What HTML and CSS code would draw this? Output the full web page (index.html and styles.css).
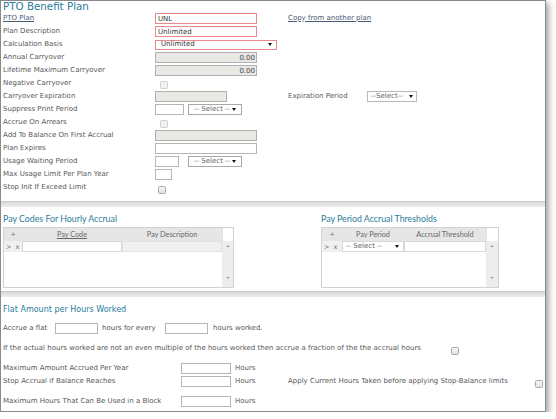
FILE: index.html
```html
<!DOCTYPE html>
<html lang="en">
<head>
<meta charset="utf-8">
<title>PTO Benefit Plan</title>
<link rel="stylesheet" href="styles.css">
</head>
<body>
<div class="window">
  <section class="plan">
    <h1 class="plan-title">PTO Benefit Plan</h1>
    <div class="row"><a class="lbl link">PTO Plan</a><div class="ctl"><input class="inp req w102" value="UNL"></div><a class="link">Copy from another plan</a></div>
    <div class="row"><span class="lbl">Plan Description</span><div class="ctl"><input class="inp req w102" value="Unlimited"></div></div>
    <div class="row"><span class="lbl">Calculation Basis</span><div class="ctl"><div class="select sel-calc req"><span class="sel-text dark">Unlimited</span><span class="arrow"></span></div></div></div>
    <div class="row"><span class="lbl">Annual Carryover</span><div class="ctl"><input class="inp dis w102" value="0.00" disabled></div></div>
    <div class="row"><span class="lbl">Lifetime Maximum Carryover</span><div class="ctl"><input class="inp dis w102" value="0.00" disabled></div></div>
    <div class="row"><span class="lbl">Negative Carryover</span><div class="ctl"><span class="cb cb-off cb-in"></span></div></div>
    <div class="row"><span class="lbl">Carryover Expiration</span><div class="ctl"><input class="inp dis w72" disabled></div><span class="rlbl">Expiration Period</span><div class="select sel-exp"><span class="sel-text">--Select--</span><span class="arrow"></span></div></div>
    <div class="row"><span class="lbl">Suppress Print Period</span><div class="ctl pair"><input class="inp w29"><div class="select sel-small"><span class="sel-text">-- Select --</span><span class="arrow"></span></div></div></div>
    <div class="row"><span class="lbl">Accrue On Arrears</span><div class="ctl"><span class="cb cb-off cb-in"></span></div></div>
    <div class="row"><span class="lbl">Add To Balance On First Accrual</span><div class="ctl"><input class="inp dis w102" disabled></div></div>
    <div class="row"><span class="lbl">Plan Expires</span><div class="ctl"><input class="inp w102"></div></div>
    <div class="row"><span class="lbl">Usage Waiting Period</span><div class="ctl pair"><input class="inp w24"><div class="select sel-small"><span class="sel-text">-- Select --</span><span class="arrow"></span></div></div></div>
    <div class="row"><span class="lbl">Max Usage Limit Per Plan Year</span><div class="ctl"><input class="inp w17"></div></div>
    <div class="row"><span class="lbl">Stop Init If Exceed Limit</span><div class="ctl"><span class="cb cb-in2"></span></div></div>
  </section>

  <div class="band"></div>

  <section class="grids">
    <div class="gcol gcol-left">
      <h2 class="gtitle">Pay Codes For Hourly Accrual</h2>
      <div class="grid grid-a">
        <div class="gh">+</div>
        <div class="gh"><span class="ul">Pay Code</span></div>
        <div class="gh">Pay Description</div>
        <div class="gh-blank"></div>
        <div class="gctl"><span>&gt;</span><span>x</span></div>
        <div class="gcell-in"></div>
        <div class="gcell-gray"></div>
        <div class="gscroll"><span class="up"></span><span class="down"></span></div>
        <div class="gempty"></div>
      </div>
    </div>
    <div class="gcol">
      <h2 class="gtitle">Pay Period Accrual Thresholds</h2>
      <div class="grid grid-b">
        <div class="gh">+</div>
        <div class="gh">Pay Period</div>
        <div class="gh">Accrual Threshold</div>
        <div class="gh-blank"></div>
        <div class="gctl"><span>&gt;</span><span>x</span></div>
        <div class="gcell-sel"><span class="sel-text">-- Select --</span><span class="arrow"></span></div>
        <div class="gcell-in"></div>
        <div class="gscroll"><span class="up"></span><span class="down"></span></div>
        <div class="gempty"></div>
      </div>
    </div>
  </section>

  <div class="band"></div>

  <section class="flat">
    <h2 class="flat-title">Flat Amount per Hours Worked</h2>
    <div class="frow first"><span class="t-accrue">Accrue a flat</span><input class="inp w43"><span class="t-every">hours for every</span><input class="inp w43"><span class="t-worked">hours worked.</span></div>
    <div class="frow gap"><span class="t-long">If the actual hours worked are not an even multiple of the hours worked then accrue a fraction of the the accrual hours</span><span class="cb cb-low"></span></div>
    <div class="frow gap"><span class="flbl">Maximum Amount Accrued Per Year</span><input class="inp w50"><span class="hours">Hours</span></div>
    <div class="frow"><span class="flbl">Stop Accrual if Balance Reaches</span><input class="inp w50"><span class="hours">Hours</span><span class="t-apply">Apply Current Hours Taken before applying Stop-Balance limits</span><span class="cb cb-low cb-right"></span></div>
    <div class="frow gap"><span class="flbl">Maximum Hours That Can Be Used in a Block</span><input class="inp w50"><span class="hours">Hours</span></div>
  </section>
</div>
</body>
</html>
```

FILE: styles.css
```css
* { box-sizing: border-box; }

body {
  margin: 0;
  background: #fff;
  font-family: "DejaVu Sans", Verdana, sans-serif;
  font-size: 7px;
  color: #585858;
}

.window {
  width: 546px;
  height: 412px;
  border: 1px solid #8a8a8a;
  background: #fff;
  box-shadow: 3px 3px 6px rgba(0, 0, 0, 0.35);
  overflow: hidden;
}

/* ---------- section 1 ---------- */
.plan { padding: 0 0 8px 2px; }

.plan-title {
  margin: 0;
  height: 10px;
  font-size: 10.3px;
  line-height: 10px;
  font-weight: normal;
  color: #2a7c9c;
}

.row {
  display: flex;
  align-items: center;
  height: 13px;
  white-space: nowrap;
}

.lbl { width: 152px; flex: none; }
.ctl { width: 133px; flex: none; display: flex; align-items: center; height: 13px; }
.pair { display: grid; grid-template-columns: 33px auto; align-items: center; }
.rlbl { width: 79px; flex: none; }

.link { color: #4a5a78; text-decoration: underline; }

.inp {
  height: 11px;
  margin: 2px 0 0;
  padding: 0 2px;
  border: 1px solid #b5b5b5;
  background: #fff;
  font-family: "DejaVu Sans", Verdana, sans-serif;
  font-size: 7px;
  line-height: 9px;
  color: #333;
  outline: none;
}
.req { border-color: #e88a8a; }
.dis { background: #e8e8e4; border-color: #b0b0b0; text-align: right; padding-right: 1px; color: #444; }

.w102 { width: 102px; }
.w72 { width: 72px; }
.w29 { width: 29px; }
.w24 { width: 24px; }
.w17 { width: 17px; }
.w43 { width: 43px; }
.w50 { width: 50px; }

.select {
  height: 11px;
  margin-top: 2px;
  border: 1px solid #a8a8a8;
  background: #fff;
  display: flex;
  align-items: center;
  justify-content: space-between;
  color: #666;
}
.sel-calc { width: 122px; padding: 0 4px 0 5px; border-color: #e88a8a; height: 10px; }
.sel-small { width: 54px; padding: 0 5px 0 5px; }
.sel-exp { width: 50px; padding: 0 3px 0 3px; border-color: #b8b8b8; }
.sel-text { line-height: 9px; }
.dark { color: #333; }

.arrow {
  width: 0;
  height: 0;
  border-left: 2px solid transparent;
  border-right: 2px solid transparent;
  border-top: 3px solid #111;
}

.cb {
  display: block;
  width: 8px;
  height: 8px;
  border: 1px solid #a9a9a9;
  border-radius: 1.5px;
  background: linear-gradient(#f7f7f7, #e0e0e0);
}
.cb-off { border-color: #cfcfcf; background: #f1f1f1; }
.cb-in { margin: 5px 0 0 5px; }
.cb-in2 { margin: 6px 0 0 3px; }

/* ---------- bands ---------- */
.band {
  height: 6px;
  border-top: 1px solid #cacaca;
  background: linear-gradient(#dadada, #ececec);
}

/* ---------- section 2 ---------- */
.grids { display: flex; padding: 6px 0 3px 2px; }
.gcol-left { width: 318px; flex: none; }

.gtitle {
  margin: 0 0 2px;
  font-family: Lato, "DejaVu Sans", sans-serif;
  font-size: 8.8px;
  line-height: 12px;
  font-weight: normal;
  color: #2a7c9c;
}

.grid {
  display: grid;
  height: 61px;
  border: 1px solid #d2d2d2;
  grid-template-rows: 13px 11px 1fr;
  font-family: Lato, "DejaVu Sans", sans-serif;
  font-size: 7.3px;
  color: #666;
}
.grid-a { width: 231px; grid-template-columns: 18px 100px 100px 11px; }
.grid-b { width: 178px; grid-template-columns: 20px 62px 82px 12px; }

.gh {
  background: #e6e6e6;
  display: flex;
  align-items: center;
  justify-content: center;
}
.gh-blank { background: #fff; border-left: 1px solid #e0e0e0; }
.ul { text-decoration: underline; }

.gctl {
  display: flex;
  align-items: center;
  gap: 4px;
  padding-left: 2px;
  background: #f0f0f0;
  font-family: "DejaVu Sans", sans-serif;
  font-size: 6.5px;
  color: #666;
}
.gcell-in { background: #fff; border: 1px solid #d8d8d8; }
.gcell-gray { background: #f0f0f0; border: 1px solid #e2e2e2; }
.gcell-sel {
  background: #fff;
  border: 1px solid #d8d8d8;
  display: flex;
  align-items: center;
  justify-content: space-between;
  padding: 0 4px 0 3px;
  font-family: "DejaVu Sans", sans-serif;
  font-size: 7px;
  color: #666;
}
.gscroll {
  grid-column: 4;
  grid-row: 2 / 4;
  background: #ededed;
  display: flex;
  flex-direction: column;
  justify-content: space-between;
  align-items: center;
  padding: 4px 0 8px;
}
.up, .down {
  width: 0;
  height: 0;
  border-left: 2px solid transparent;
  border-right: 2px solid transparent;
}
.up { border-bottom: 2px solid #a0a0a0; }
.down { border-top: 2px solid #a0a0a0; }
.gempty { grid-column: 1 / 4; grid-row: 3; background: #fff; }

/* ---------- section 3 ---------- */
.flat { padding: 7px 1px 0 2px; }

.flat-title {
  margin: 0;
  font-size: 8px;
  line-height: 12px;
  font-weight: normal;
  color: #2a7c9c;
}

.frow {
  display: flex;
  align-items: center;
  height: 13px;
  white-space: nowrap;
}
.frow.first { margin-top: 5px; }
.frow.gap { margin-top: 7px; }

.t-accrue { width: 52px; flex: none; }
.t-every { width: 67px; flex: none; padding-left: 4px; }
.t-worked { padding-left: 5px; }
.t-long { width: 448px; flex: none; overflow: hidden; }
.flbl { width: 178px; flex: none; }
.hours { width: 57px; flex: none; padding-left: 4px; }
.t-apply { flex: none; }
.cb-low { margin-top: 6px; flex: none; }
.cb-right { margin-left: auto; margin-right: 1px; }
```
